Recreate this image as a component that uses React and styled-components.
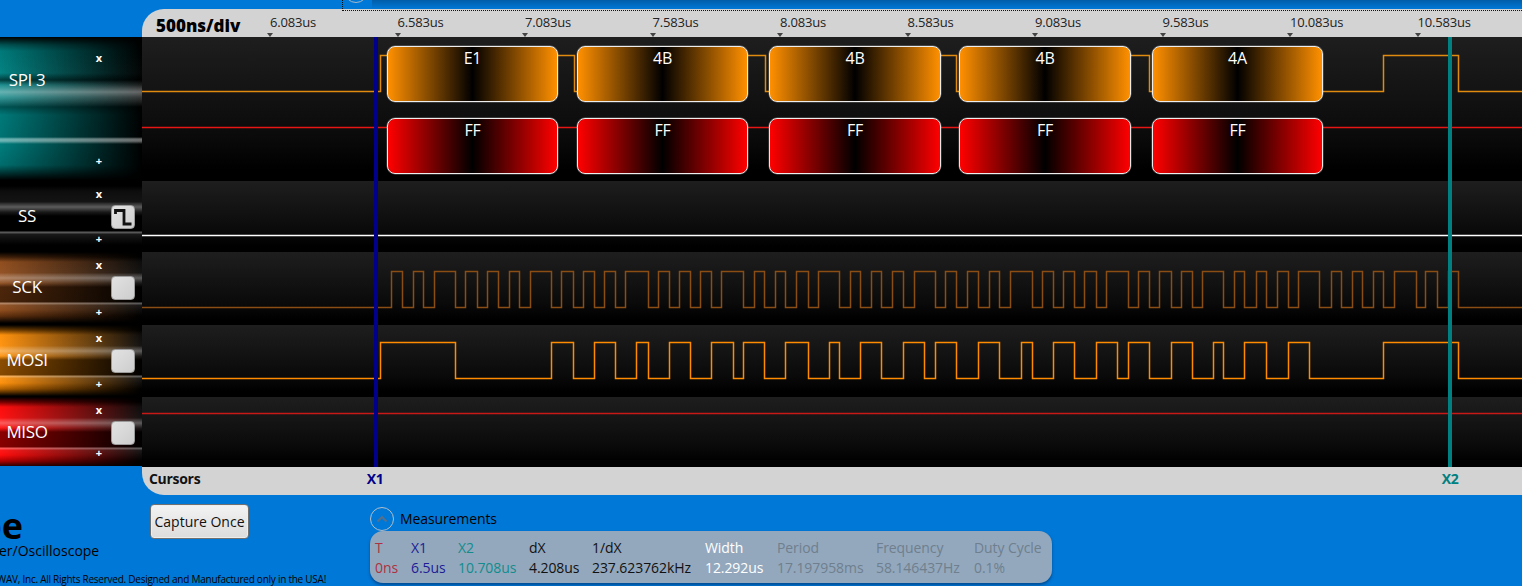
import React from 'react';
import styled, { createGlobalStyle } from 'styled-components';

const GlobalStyle = createGlobalStyle`
  html, body {
    margin: 0;
    padding: 0;
    background: #0078d7;
    overflow: hidden;
  }
  * {
    box-sizing: border-box;
  }
`;

const FONT = `'Open Sans', 'Noto Sans', sans-serif`;

const Page = styled.div`
  position: relative;
  display: flex;
  flex-direction: column;
  width: 1522px;
  height: 586px;
  overflow: hidden;
  background: #0078d7;
  font-family: ${FONT};
`;

const TopStrip = styled.div`
  position: relative;
  flex: 0 0 9px;
`;

const TopShadow = styled.div`
  position: absolute;
  top: 0;
  left: 372px;
  right: 0;
  height: 9px;
  background: linear-gradient(180deg, rgba(0, 0, 0, 0.22), rgba(0, 0, 0, 0));
`;

const CollapsedCircle = styled.div`
  position: absolute;
  top: -21px;
  left: 344px;
  width: 24px;
  height: 24px;
  border: 1px solid #a9b9c6;
  border-radius: 50%;
`;

const FocusRect = styled.div`
  position: absolute;
  z-index: 5;
  top: -10px;
  left: 342px;
  right: -10px;
  height: 21px;
  border: 1px dotted #111;
`;

const Scope = styled.div`
  display: flex;
  flex: 0 0 486px;
`;

const LabelColumn = styled.div`
  display: flex;
  flex-direction: column;
  flex: 0 0 142px;
  padding-top: 28px;
`;

const compactBands = `
  #000 0px,
  rgba(0, 0, 0, 0.55) 5px,
  rgba(255, 255, 255, 0.05) 10px,
  rgba(255, 255, 255, 0.08) 21px,
  rgba(255, 255, 255, 0.16) 22px,
  rgba(255, 255, 255, 0.36) 26px,
  rgba(255, 255, 255, 0.1) 31px,
  rgba(0, 0, 0, 0.45) 35px,
  rgba(0, 0, 0, 0.48) 50px,
  rgba(255, 255, 255, 0.36) 51px,
  rgba(255, 255, 255, 0.32) 52px,
  rgba(255, 255, 255, 0.1) 53px,
  rgba(255, 255, 255, 0.05) 58px,
  rgba(0, 0, 0, 0.3) 64px,
  #000 71px
`;

const tallBands = `
  #000 0px,
  rgba(0, 0, 0, 0.35) 8px,
  rgba(0, 0, 0, 0.05) 14px,
  rgba(255, 255, 255, 0.02) 36px,
  rgba(0, 0, 0, 0.5) 43px,
  rgba(255, 255, 255, 0.12) 48px,
  rgba(255, 255, 255, 0.4) 55px,
  rgba(255, 255, 255, 0.22) 60px,
  rgba(0, 0, 0, 0.35) 70px,
  rgba(0, 0, 0, 0.05) 78px,
  rgba(0, 0, 0, 0.1) 100px,
  rgba(255, 255, 255, 0.42) 102px,
  rgba(255, 255, 255, 0.42) 104px,
  rgba(0, 0, 0, 0.02) 107px,
  rgba(0, 0, 0, 0.15) 128px,
  #000 143px
`;

const LabelRow = styled.div`
  display: grid;
  grid-template-columns: 54px 33px 24px 24px 7px;
  grid-template-rows: ${(p) => (p.$tall ? '31px' : '24px')} 24px 1fr;
  flex: 0 0 ${(p) => p.$h}px;
  background:
    linear-gradient(180deg, ${(p) => (p.$tall ? tallBands : compactBands)}),
    linear-gradient(90deg, ${(p) => p.$color}, #000);
  color: #fff;
`;

const LabelName = styled.div`
  grid-column: 1;
  grid-row: 2;
  align-self: center;
  margin-top: ${(p) => (p.$tall ? 0 : -2)}px;
  text-align: center;
  font-size: 17px;
  letter-spacing: -0.35px;
  line-height: 24px;
  white-space: nowrap;
`;

const RowAction = styled.div`
  grid-column: 3;
  font-size: 11px;
  font-weight: 700;
  line-height: 12px;
  text-align: center;
`;

const CloseMark = styled(RowAction)`
  grid-row: 1;
  align-self: end;
  margin-bottom: ${(p) => (p.$tall ? 4 : 5)}px;
`;

const AddMark = styled(RowAction)`
  grid-row: 3;
  align-self: end;
  margin-bottom: ${(p) => (p.$tall ? 14 : 7)}px;
`;

const TriggerToggle = styled.div`
  grid-column: 4;
  grid-row: 2;
  display: flex;
  align-items: center;
  justify-content: center;
  width: 24px;
  height: 24px;
  border: 1px solid #9a9a9a;
  border-radius: 4px;
  background: linear-gradient(135deg, #e2e2e2, #cdcdcd);
`;

const ScopeView = styled.div`
  display: flex;
  flex-direction: column;
  flex: 1;
  min-width: 0;
`;

const Ruler = styled.div`
  display: flex;
  align-items: center;
  flex: 0 0 28px;
  padding-left: 14px;
  background: #d3d3d3;
  border-top-left-radius: 22px;
  overflow: hidden;
`;

const DivLabel = styled.div`
  flex: 0 0 114px;
  min-width: 0;
  padding-top: 4px;
  color: #000;
  font-size: 17px;
  font-weight: 800;
  white-space: nowrap;
`;

const Tick = styled.div`
  position: relative;
  flex: 0 0 127.5px;
  height: 28px;
  padding-top: 5px;
  color: #222;
  font-size: 13px;
  letter-spacing: -0.2px;
  line-height: 16px;
  white-space: nowrap;
`;

const TickMark = styled.span`
  position: absolute;
  left: -3px;
  bottom: 0;
  width: 0;
  height: 0;
  border-left: 3.5px solid transparent;
  border-right: 3.5px solid transparent;
  border-top: 4px solid #444;
`;

const Tracks = styled.div`
  position: relative;
  display: flex;
  flex-direction: column;
  flex: 0 0 430px;
`;

const Track = styled.div`
  flex: 0 0 ${(p) => p.$h}px;
  background: linear-gradient(180deg, #1e1e1e 0%, #0a0a0a 70%, #000 92%);
`;

const Waves = styled.svg`
  position: absolute;
  top: 0;
  left: 0;
`;

const Burst = styled.div`
  position: absolute;
  top: ${(p) => p.$top}px;
  left: ${(p) => p.$x}px;
  width: ${(p) => p.$w}px;
  height: 56px;
  border: 1px solid #eee;
  border-radius: 8px;
  background: linear-gradient(90deg, ${(p) => p.$color}, #000 50%, ${(p) => p.$color});
  box-shadow: 0 0 0 0.5px rgba(255, 255, 255, 0.35);
  color: #fff;
  font-size: 16px;
  letter-spacing: -0.2px;
  line-height: 22px;
  text-align: center;
`;

const CursorLine = styled.div`
  position: absolute;
  top: 0;
  bottom: 0;
  left: ${(p) => p.$x}px;
  width: 4px;
  background: ${(p) => p.$color};
`;

const CursorBar = styled.div`
  position: relative;
  display: flex;
  align-items: center;
  flex: 0 0 28px;
  padding: 0 0 5px 7px;
  background: #d3d3d3;
  border-bottom-left-radius: 22px;
  color: #111;
  font-size: 14px;
  font-weight: 700;
  letter-spacing: -0.3px;
`;

const CursorTag = styled.span`
  position: absolute;
  left: ${(p) => p.$x}px;
  width: 30px;
  text-align: center;
  color: ${(p) => p.$color};
`;

const Footer = styled.div`
  display: flex;
  flex: 1;
  min-height: 0;
`;

const Brand = styled.div`
  flex: 0 0 150px;
  min-width: 0;
  white-space: nowrap;
  color: #000;
`;

const BrandName = styled.div`
  margin: 16px 0 0 -21px;
  font-size: 36px;
  font-weight: 700;
  line-height: 30px;
`;

const BrandLine = styled.div`
  margin-left: -1px;
  font-size: 14px;
  line-height: 20px;
`;

const Copyright = styled.div`
  margin: 11px 0 0 -3px;
  font-size: 10px;
  letter-spacing: -0.25px;
  line-height: 14px;
`;

const CaptureButton = styled.button`
  flex: 0 0 99px;
  align-self: flex-start;
  height: 35px;
  margin-top: 9px;
  padding: 0;
  border: 1px solid #707070;
  border-radius: 4px;
  background: linear-gradient(180deg, #f3f3f3, #dcdcdc);
  box-shadow: inset 0 0 0 1px #eee;
  color: #111;
  font-family: ${FONT};
  font-size: 14px;
  white-space: nowrap;
`;

const MeasureBlock = styled.div`
  display: flex;
  flex-direction: column;
  flex: 0 0 682px;
  margin: 12px 0 0 121px;
`;

const MeasureHead = styled.div`
  display: flex;
  align-items: center;
  gap: 6px;
  height: 24px;
  padding-bottom: 1px;
  color: #000;
  font-size: 14px;
  letter-spacing: -0.1px;
`;

const ChevronCircle = styled.div`
  display: flex;
  align-items: center;
  justify-content: center;
  flex: 0 0 24px;
  height: 24px;
  margin-top: 1px;
  border: 1px solid #b4bec8;
  border-radius: 50%;
`;

const MeasurePanel = styled.div`
  display: flex;
  height: 52px;
  padding: 7px 0 0 5px;
  border-radius: 13px;
  background: #93a8bd;
  box-shadow: 0 2px 3px rgba(0, 40, 90, 0.55);
`;

const MeasureColumn = styled.div`
  flex: 0 0 ${(p) => p.$w}px;
  min-width: 0;
  color: ${(p) => p.$color};
  font-size: 14px;
  letter-spacing: -0.08px;
  line-height: 20px;
  white-space: nowrap;
`;

const TICKS = ['6.083us', '6.583us', '7.083us', '7.583us', '8.083us', '8.583us', '9.083us', '9.583us', '10.083us', '10.583us'];

const LABELS = [
  { name: 'SPI 3', h: 144, color: '#008080', tall: true },
  { name: 'SS', h: 71, color: '#000000', toggle: 'edge' },
  { name: 'SCK', h: 73, color: '#8b4513', toggle: 'off' },
  { name: 'MOSI', h: 72, color: '#ff8c00', toggle: 'off' },
  { name: 'MISO', h: 69, color: '#ff0000', toggle: 'off' },
];

const TRACK_HEIGHTS = [144, 71, 73, 72, 70];

const MOSI_BYTES = ['E1', '4B', '4B', '4B', '4A'];

const BURSTS = [
  { x: 245, w: 171 },
  { x: 435, w: 171 },
  { x: 627, w: 172 },
  { x: 817, w: 172 },
  { x: 1010, w: 171 },
];

const SCK_EDGES = [
  391, 402, 413, 423, 434, 455, 465, 477, 487, 498, 509, 519, 530, 551, 561, 573, 583, 594, 604, 615, 625, 648, 658, 669,
  679, 690, 700, 711, 721, 743, 754, 764, 775, 785, 796, 808, 818, 839, 850, 860, 871, 881, 892, 903, 914, 935, 945, 956,
  967, 978, 989, 999, 1010, 1032, 1042, 1053, 1063, 1074, 1084, 1096, 1106, 1128, 1138, 1149, 1159, 1171, 1181, 1192, 1202,
  1223, 1234, 1244, 1256, 1266, 1277, 1288, 1298, 1319, 1331, 1341, 1352, 1362, 1373, 1383, 1394, 1416, 1425, 1437, 1448, 1458,
];

const MOSI_EDGES = [
  380, 455, 551, 573, 594, 615, 636, 648, 669, 690, 711, 733, 743, 764, 785, 808, 829, 839, 860, 881, 903, 924, 935, 956,
  978, 999, 1021, 1032, 1053, 1074, 1096, 1117, 1128, 1149, 1171, 1192, 1213, 1223, 1244, 1266, 1288, 1309, 1383, 1458,
];

// edges alternate rise / fall, coordinates are page x and y
const squareWave = (edges, high, low) => {
  let level = low;
  let d = `M0 ${low - 37 + 0.5}`;
  edges.forEach((edge) => {
    const x = edge - 142 + 0.5;
    level = level === low ? high : low;
    d += `H${x}V${level - 37 + 0.5}`;
  });
  return `${d}H1380`;
};

// the frame line is hidden behind the bursts, so only the gaps show
const frameWave = () => {
  const high = 18.5;
  const low = 54.5;
  return [
    `M0 ${low}H238.5V${high}H250`,
    `M410 ${high}H432.5V${low}H440`,
    `M600 ${high}H623.5V${low}H630`,
    `M795 ${high}H814.5V${low}H820`,
    `M985 ${high}H1007.5V${low}H1015`,
    `M1175 ${low}H1241.5V${high}H1316.5V${low}H1380`,
  ].join('');
};

const MEASUREMENTS = [
  { title: 'T', value: '0ns', w: 36, color: '#b0303f' },
  { title: 'X1', value: '6.5us', w: 47, color: '#1c1c96' },
  { title: 'X2', value: '10.708us', w: 71, color: '#128c8c' },
  { title: 'dX', value: '4.208us', w: 63, color: '#111' },
  { title: '1/dX', value: '237.623762kHz', w: 113, color: '#111' },
  { title: 'Width', value: '12.292us', w: 72, color: '#fff' },
  { title: 'Period', value: '17.197958ms', w: 99, color: '#6f7f8e' },
  { title: 'Frequency', value: '58.146437Hz', w: 98, color: '#6f7f8e' },
  { title: 'Duty Cycle', value: '0.1%', w: 73, color: '#6f7f8e' },
];

const App = () => (
  <Page>
    <GlobalStyle />
    <TopStrip>
      <TopShadow />
      <CollapsedCircle />
      <FocusRect />
    </TopStrip>

    <Scope>
      <LabelColumn>
        {LABELS.map((label) => (
          <LabelRow key={label.name} $h={label.h} $color={label.color} $tall={label.tall}>
            <CloseMark $tall={label.tall}>x</CloseMark>
            <LabelName $tall={label.tall}>{label.name}</LabelName>
            {label.toggle && (
              <TriggerToggle>
                {label.toggle === 'edge' && (
                  <svg width="20" height="20" viewBox="0 0 20 20">
                    <path d="M2.5 7V3.5H11V17H18.5" fill="none" stroke="#111" strokeWidth="2.8" />
                  </svg>
                )}
              </TriggerToggle>
            )}
            <AddMark $tall={label.tall}>+</AddMark>
          </LabelRow>
        ))}
      </LabelColumn>

      <ScopeView>
        <Ruler>
          <DivLabel>500ns/div</DivLabel>
          {TICKS.map((tick) => (
            <Tick key={tick}>
              {tick}
              <TickMark />
            </Tick>
          ))}
        </Ruler>

        <Tracks>
          {TRACK_HEIGHTS.map((h, i) => (
            <Track key={i} $h={h} />
          ))}
          <Waves width="1380" height="430" viewBox="0 0 1380 430">
            <path d={frameWave()} fill="none" stroke="#e08a10" strokeWidth="1.5" />
            <path d="M0 90.5H1380" stroke="#e81515" strokeWidth="1.4" />
            <path d="M0 198.5H1380" stroke="#fff" strokeWidth="1.3" />
            <path d={squareWave(SCK_EDGES, 271, 307)} fill="none" stroke="#8a4d14" strokeWidth="1.5" />
            <path d={squareWave(MOSI_EDGES, 342, 378)} fill="none" stroke="#ff8c00" strokeWidth="1.5" />
            <path d="M0 376.5H1380" stroke="#c81818" strokeWidth="1.4" />
          </Waves>
          {BURSTS.map((burst, i) => (
            <Burst key={`mosi-${i}`} $top={9} $x={burst.x} $w={burst.w} $color="#ff9000">
              {MOSI_BYTES[i]}
            </Burst>
          ))}
          {BURSTS.map((burst, i) => (
            <Burst key={`miso-${i}`} $top={81} $x={burst.x} $w={burst.w} $color="#ff0000">
              FF
            </Burst>
          ))}
          <CursorLine $x={232} $color="#00008b" />
          <CursorLine $x={1306} $color="#008080" />
        </Tracks>

        <CursorBar>
          Cursors
          <CursorTag $x={218} $color="#00008b">X1</CursorTag>
          <CursorTag $x={1293} $color="#008080">X2</CursorTag>
        </CursorBar>
      </ScopeView>
    </Scope>

    <Footer>
      <Brand>
        <BrandName>pe</BrandName>
        <BrandLine>er/Oscilloscope</BrandLine>
        <Copyright>WAV, Inc. All Rights Reserved. Designed and Manufactured only in the USA!</Copyright>
      </Brand>

      <CaptureButton type="button">Capture Once</CaptureButton>

      <MeasureBlock>
        <MeasureHead>
          <ChevronCircle>
            <svg width="14" height="14" viewBox="0 0 14 14">
              <path d="M2.5 9.5L7 5L11.5 9.5" fill="none" stroke="#54708c" strokeWidth="2" />
            </svg>
          </ChevronCircle>
          Measurements
        </MeasureHead>
        <MeasurePanel>
          {MEASUREMENTS.map((item) => (
            <MeasureColumn key={item.title} $w={item.w} $color={item.color}>
              <div>{item.title}</div>
              <div>{item.value}</div>
            </MeasureColumn>
          ))}
        </MeasurePanel>
      </MeasureBlock>
    </Footer>
  </Page>
);

export default App;
